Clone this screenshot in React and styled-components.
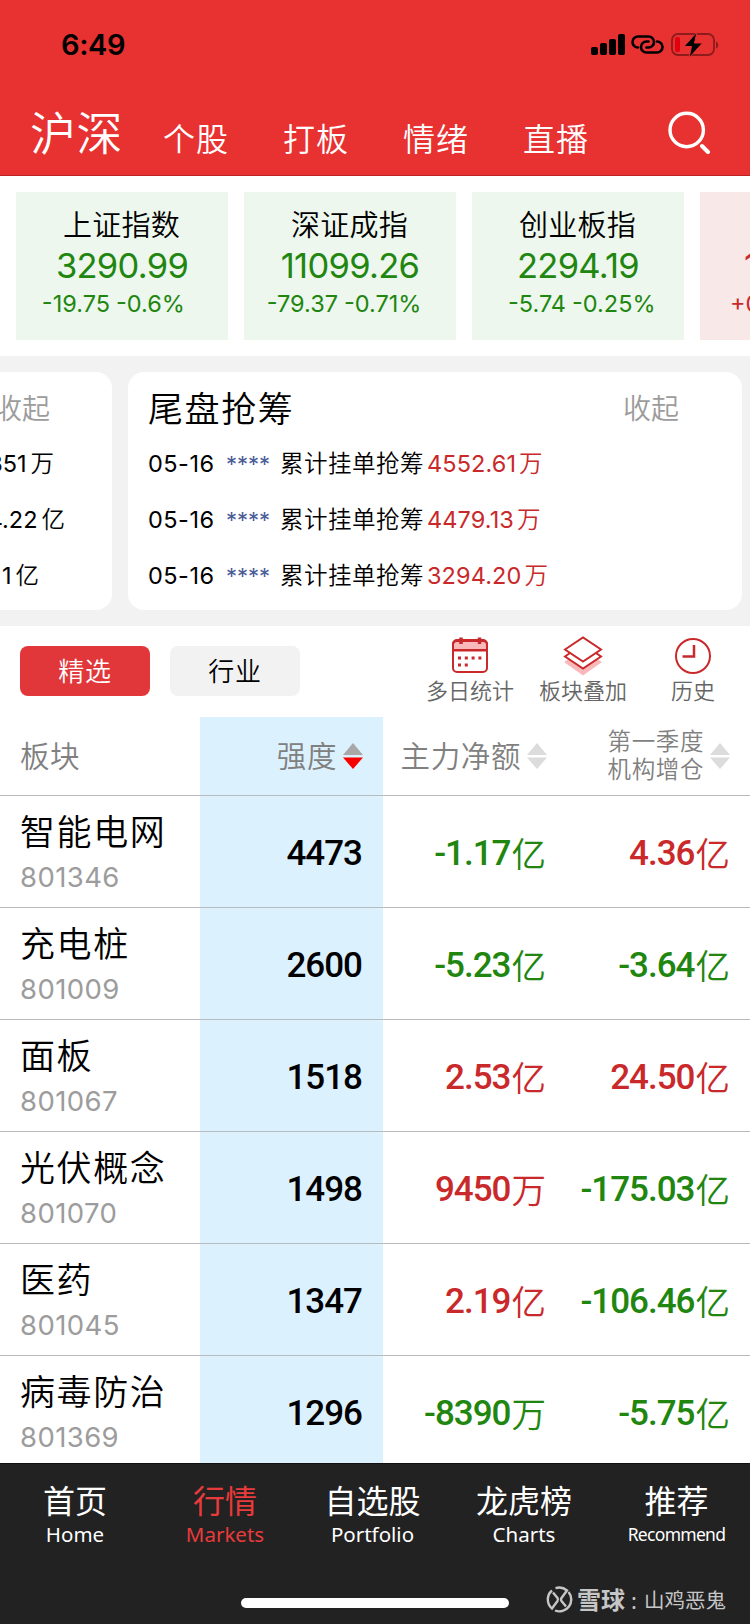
import React from "react";
import styled, { createGlobalStyle } from "styled-components";

/* COLORS */
const colorRed = "#e83131";
const colorButtonRed = "#e1373b";
const colorUp = "#c9292b";
const colorDown = "#21860f";
const colorGray = "#808080";
const colorLightGray = "#9c9c9c";
const colorPage = "#f2f2f2";
const colorHighlight = "#dcf1fe";
const colorDark = "#222222";

/* FONT */
const fontFamily = "Inter, 'Noto Sans CJK SC', sans-serif";
const fontNumber = "Roboto, 'Noto Sans CJK SC', sans-serif";
const fontFooter = "'Noto Sans', 'Noto Sans CJK SC', sans-serif";

const GlobalStyle = createGlobalStyle`
    * {
        box-sizing: border-box;
    }

    body {
        margin: 0;
        background-color: #fff;
    }
`;

const Screen = styled.div`
    width: 750px;
    height: 1624px;
    overflow: hidden;
    display: flex;
    flex-direction: column;
    background-color: #fff;
    color: #000;
    font-family: ${fontFamily};
    font-weight: 400;
    white-space: nowrap;
`;

/* HEADER */
const Header = styled.header`
    flex: none;
    height: 176px;
    background-color: ${colorRed};
    border-bottom: 1px solid #bb2424;
`;

const StatusBar = styled.div`
    height: 90px;
    padding: 0 31px 0 61px;
    display: flex;
    align-items: center;
    justify-content: space-between;
`;

const Time = styled.span`
    font-size: 29px;
    font-weight: 600;
    line-height: 40px;
    letter-spacing: -0.4px;
`;

const Nav = styled.nav`
    height: 85px;
    padding: 0 38px 0 30px;
    display: flex;
    align-items: center;
    color: #fff;
`;

const NavTitle = styled.span`
    width: 133px;
    font-size: 46px;
    line-height: 60px;
    letter-spacing: 0.5px;
    font-weight: 350;
`;

const NavTab = styled.span`
    width: 120px;
    padding-top: 15px;
    font-size: 32px;
    line-height: 40px;
    letter-spacing: 1px;
    font-weight: 350;
`;

const SearchIcon = styled.svg`
    margin-left: auto;
    margin-bottom: 2px;
`;

/* INDEX CARDS */
const Cards = styled.div`
    flex: none;
    height: 180px;
    padding: 16px;
    display: flex;
    gap: 16px;
`;

const Card = styled.div`
    flex: none;
    width: 212px;
    height: 148px;
    padding-top: 16px;
    text-align: center;
    color: ${(props) => (props.$up ? colorUp : colorDown)};
    background-color: ${(props) => (props.$up ? "#f9e8e8" : "#edf7ed")};
`;

const CardName = styled.div`
    color: #000;
    height: 34px;
    padding-right: 1px;
    font-size: 29px;
    line-height: 36px;
    letter-spacing: 0.3px;
    font-weight: 350;
`;

const CardValue = styled.div`
    font-size: 34.5px;
    line-height: 47px;
    height: 48px;
    letter-spacing: -0.7px;
    padding-left: ${(props) => props.$left || 0}px;
    text-align: ${(props) => (props.$left ? "left" : "center")};
`;

const CardChange = styled.div`
    display: grid;
    grid-template-columns: 94px 1fr;
    column-gap: 6px;
    font-size: 23.5px;
    line-height: 28px;
    text-align: left;
    padding-left: ${(props) => props.$left || 0}px;

    span:first-child {
        text-align: ${(props) => (props.$left ? "left" : "right")};
    }
`;

/* PANELS */
const Panels = styled.div`
    flex: none;
    height: 270px;
    padding: 16px 8px 16px 0;
    display: flex;
    gap: 16px;
    background-color: ${colorPage};
`;

const PanelEnd = styled.section`
    width: 112px;
    padding-top: 16px;
    border-radius: 0 16px 16px 0;
    background-color: #fff;
    overflow: hidden;
`;

const ClippedLine = styled.div`
    display: flex;
    justify-content: flex-end;
    padding-right: ${(props) => props.$right}px;
    font-size: 23.5px;
    line-height: 56px;

    span {
        margin-left: ${(props) => props.$gap || 4}px;
        font-weight: 350;
    }
`;

const Panel = styled.section`
    flex: 1;
    padding: 16px 63px 0 20px;
    border-radius: 16px;
    background-color: #fff;
`;

const PanelHeader = styled.div`
    height: 48px;
    display: flex;
    justify-content: space-between;
    padding-right: ${(props) => props.$right || 0}px;
    line-height: 42px;
`;

const PanelTitle = styled.h2`
    margin: 0;
    font-size: 35px;
    font-weight: 350;
    letter-spacing: 1.6px;
`;

const Collapse = styled.span`
    color: ${colorLightGray};
    margin-left: auto;
    font-size: 28px;
    font-weight: 350;
`;

const OrderLine = styled.div`
    display: flex;
    font-size: 23.5px;
    line-height: 56px;
`;

const OrderDate = styled.span`
    width: 77px;
    letter-spacing: 0.5px;
`;

const OrderStock = styled.span`
    width: 55px;
    padding-left: 1px;
    color: #4a5b96;
    font-size: 22px;
`;

const OrderText = styled.span`
    width: 147px;
    letter-spacing: 0.5px;
    font-weight: 350;
`;

const OrderAmount = styled.span`
    color: ${colorUp};
    letter-spacing: 0.1px;

    span {
        margin-left: 3px;
        font-weight: 350;
    }
`;

/* TOOLBAR */
const Toolbar = styled.div`
    flex: none;
    height: 91px;
    padding: 10px 24px 0 20px;
    display: flex;
    align-items: flex-start;
`;

const FilterButton = styled.button`
    width: 130px;
    height: 50px;
    margin: 10px 20px 0 0;
    padding: 0;
    border: none;
    border-radius: 8px;
    font: 350 26px / 51px ${fontFamily};
    letter-spacing: 0.8px;
    color: ${(props) => (props.$active ? "#fff" : "#000")};
    background-color: ${(props) => (props.$active ? colorButtonRed : colorPage)};
`;

const Tools = styled.div`
    margin-left: auto;
    display: flex;
    gap: 25px;
`;

const Tool = styled.div`
    display: flex;
    flex-direction: column;
    align-items: center;
    min-width: ${(props) => props.$min || 0}px;
    color: #666;
    font-size: 22px;
    line-height: 30px;
    font-weight: 350;

    &:last-child {
        margin-left: 8px;
    }

    svg {
        display: block;
        width: 40px;
        height: 40px;
    }
`;

/* TABLE */
const Table = styled.div`
    flex: none;
    height: 746px;
    overflow: hidden;
`;

const Row = styled.div`
    display: grid;
    grid-template-columns: 200px 183px 183px 184px;
    height: ${(props) => (props.$head ? 79 : 112)}px;
    border-bottom: 1px solid #b9bcbf;
    background: linear-gradient(
        to right,
        transparent 200px,
        ${colorHighlight} 200px,
        ${colorHighlight} 383px,
        transparent 383px
    );
`;

const HeadCell = styled.div`
    display: flex;
    align-items: center;
    justify-content: ${(props) => (props.$left ? "flex-start" : "flex-end")};
    gap: 6px;
    padding: 0 ${(props) => props.$right || 20}px 0 ${(props) => (props.$left ? 20 : 0)}px;
    color: ${colorGray};
    font-size: 29.5px;
    line-height: 40px;
    letter-spacing: 0.6px;
    font-weight: 350;

    svg {
        flex: none;
    }
`;

const SmallHead = styled.span`
    font-size: 23.5px;
    line-height: 28px;
    letter-spacing: 0.6px;
`;

const NameCell = styled.div`
    padding: 14px 0 0 20px;
`;

const Name = styled.div`
    font-size: 35px;
    line-height: 45px;
    height: 44px;
    letter-spacing: 1.6px;
    font-weight: 350;
`;

const Code = styled.div`
    color: ${colorLightGray};
    font-size: 27.5px;
    line-height: 46px;
    letter-spacing: 0.4px;
`;

const NumberCell = styled.div`
    display: flex;
    align-items: center;
    justify-content: flex-end;
    padding: 4px 21px 0 0;
    font-family: ${fontNumber};
    font-size: 35px;
    font-weight: 500;
    letter-spacing: -1px;
    color: ${(props) => props.$color || "#000"};

    span {
        margin: -4px -1px 0 1px;
        font-size: 34.5px;
        letter-spacing: 0;
        font-weight: 350;
    }
`;

/* FOOTER */
const Footer = styled.footer`
    flex: 1;
    border-top: 1px solid #111;
    background-color: ${colorDark};
    font-family: ${fontFooter};
`;

const TabBar = styled.div`
    height: 92px;
    padding-top: 15px;
    display: grid;
    grid-template-columns: 150px 150px 145px 158px 147px;
`;

const FooterTab = styled.div`
    text-align: center;
    color: ${(props) => (props.$active ? "#e83b3b" : "#fff")};
    font-size: 32px;
    line-height: 44px;

    small {
        display: block;
        font-size: ${(props) => (props.$small ? 17.5 : 20.5)}px;
        letter-spacing: ${(props) => (props.$small ? "-0.7px" : 0)};
        line-height: 22px;
    }
`;

const BottomBar = styled.div`
    height: 66px;
    display: grid;
    grid-template-columns: 241px 268px 1fr;
    align-items: center;
`;

const HomeIndicator = styled.div`
    grid-column: 2;
    height: 10px;
    margin-top: 28px;
    border-radius: 5px;
    background-color: #fff;
`;

const Watermark = styled.div`
    margin-top: 21px;
    padding-left: 37px;
    display: flex;
    align-items: center;
    color: #c6c6c6;
    font-size: 20.5px;
    line-height: 28px;

    b {
        margin-left: 4px;
        font-size: 24px;
        font-weight: 600;
    }
`;

const Colon = styled.span`
    width: 19px;
    padding-left: 6px;
    font-size: 22px;
`;

const indices = [
    { name: "上证指数", value: "3290.99", change: "-19.75", percent: "-0.6%" },
    { name: "深证成指", value: "11099.26", change: "-79.37", percent: "-0.71%" },
    { name: "创业板指", value: "2294.19", change: "-5.74", percent: "-0.25%" },
];

const orders = ["4552.61", "4479.13", "3294.20"];

const sectors = [
    { name: "智能电网", code: "801346", strength: 4473, net: ["-1.17", "亿"], fund: ["4.36", "亿"] },
    { name: "充电桩", code: "801009", strength: 2600, net: ["-5.23", "亿"], fund: ["-3.64", "亿"] },
    { name: "面板", code: "801067", strength: 1518, net: ["2.53", "亿"], fund: ["24.50", "亿"] },
    { name: "光伏概念", code: "801070", strength: 1498, net: ["9450", "万"], fund: ["-175.03", "亿"] },
    { name: "医药", code: "801045", strength: 1347, net: ["2.19", "亿"], fund: ["-106.46", "亿"] },
    { name: "病毒防治", code: "801369", strength: 1296, net: ["-8390", "万"], fund: ["-5.75", "亿"] },
];

const footerTabs = [
    { label: "首页", en: "Home" },
    { label: "行情", en: "Markets", active: true },
    { label: "自选股", en: "Portfolio" },
    { label: "龙虎榜", en: "Charts" },
    { label: "推荐", en: "Recommend", small: true },
];

function StatusIcons() {
    return (
        <svg width="128" height="26" viewBox="0 0 128 26" fill="none">
            <g fill="#000">
                <rect x="0" y="15" width="7" height="8" rx="2" />
                <rect x="9" y="11" width="7" height="12" rx="2" />
                <rect x="18" y="7" width="7" height="16" rx="2" />
                <rect x="27" y="2" width="7" height="21" rx="2" />
            </g>
            <g stroke="#000" strokeWidth="2.6" strokeLinecap="round">
                <path d="M47 15.500a5.500 5.500 0 0 1 0-11h10.500a5.500 5.500 0 0 1 0 11h-2" />
                <path d="M66 9.500a5.500 5.500 0 0 1 0 11h-10.500a5.500 5.500 0 0 1 0-11h2" />
            </g>
            <rect x="81" y="2" width="42" height="21" rx="6" stroke="#8f1c1c" strokeWidth="1.800" />
            <path d="M125 9.500c3 1 3 6 0 7z" fill="#8f1c1c" />
            <rect x="84" y="5" width="5" height="15" rx="2" fill="#e0000f" />
            <path
                d="M106 0L93 14.500h7.500l-2.500 11.500 13.500-15h-8z"
                fill="#000"
                stroke={colorRed}
                strokeWidth="1"
            />
        </svg>
    );
}

function SortArrows({ up = "#dcdcdc", down = "#dcdcdc" }) {
    return (
        <svg width="20" height="26" viewBox="0 0 20 26">
            <path d="M10 0L20 12H0z" fill={up} />
            <path d="M10 26L0 14.500H20z" fill={down} />
        </svg>
    );
}

function CalendarIcon() {
    return (
        <svg viewBox="0 0 40 40" fill="none" stroke={colorUp} strokeWidth="2">
            <path d="M3 14V9q0-4 4-4h26q4 0 4 4v5z" fill="#f9b9bb" />
            <rect x="3" y="4" width="34" height="32" rx="4" />
            <path d="M3 14.500h34" />
            <path d="M11 1.500v6.500M29.500 1.500v6.500" strokeWidth="3.500" />
            <path d="M8 22h26M8 29h12" strokeWidth="3" strokeDasharray="3 3.800" />
        </svg>
    );
}

function LayersIcon() {
    return (
        <svg viewBox="0 0 40 40" fill="none" stroke={colorUp} strokeWidth="2">
            <path d="M1 26L20 14L39 26L20 39.500z" fill="#f9b9bb" stroke="none" />
            <path d="M2 20.500L20 8L38 20.500L20 32.500z" fill="#fff" />
            <path d="M2 13.500L20 1.500L38 13.500L20 25.500z" fill="#fff" />
        </svg>
    );
}

function ClockIcon() {
    return (
        <svg viewBox="0 0 40 40" fill="none" stroke={colorUp} strokeWidth="2">
            <circle cx="20" cy="20" r="17" />
            <path d="M21 9v11.500H9.500" strokeWidth="2.500" />
        </svg>
    );
}

function XueqiuIcon() {
    return (
        <svg width="27" height="27" viewBox="0 0 27 27" fill="none" stroke="#c6c6c6" strokeWidth="2.400">
            <path d="M6 4.500A11.800 11.800 0 0 0 6 22.500L11.500 15q1-1.500 0-3L7 6.500" />
            <path d="M9.500 2.200A12 12 0 0 1 21 4.500L15.500 12q-1 1.500 0 3l4.500 5.500" />
            <path d="M22.500 6A11.800 11.800 0 0 1 9 24.500" />
        </svg>
    );
}

const amountColor = (value) => (value.startsWith("-") ? colorDown : colorUp);

function App() {
    return (
        <Screen>
            <GlobalStyle />
            <Header>
                <StatusBar>
                    <Time>6:49</Time>
                    <StatusIcons />
                </StatusBar>
                <Nav>
                    <NavTitle>沪深</NavTitle>
                    <NavTab>个股</NavTab>
                    <NavTab>打板</NavTab>
                    <NavTab>情绪</NavTab>
                    <NavTab>直播</NavTab>
                    <SearchIcon width="44" height="44" viewBox="0 0 44 44" fill="none" stroke="#fff">
                        <circle cx="18.700" cy="20" r="16.700" strokeWidth="3.400" />
                        <path d="M34 36l6 6" strokeWidth="4" strokeLinecap="round" />
                    </SearchIcon>
                </Nav>
            </Header>

            <Cards>
                {indices.map((index) => (
                    <Card key={index.name}>
                        <CardName>{index.name}</CardName>
                        <CardValue>{index.value}</CardValue>
                        <CardChange>
                            <span>{index.change}</span>
                            <span>{index.percent}</span>
                        </CardChange>
                    </Card>
                ))}
                <Card $up>
                    <CardName />
                    <CardValue $left={44}>1</CardValue>
                    <CardChange $left={30}>
                        <span>+0</span>
                    </CardChange>
                </Card>
            </Cards>

            <Panels>
                <PanelEnd>
                    <PanelHeader $right={62}>
                        <Collapse as={CollapseEnd}>收起</Collapse>
                    </PanelHeader>
                    <ClippedLine $right={58}>
                        351<span>万</span>
                    </ClippedLine>
                    <ClippedLine $right={47}>
                        4.22<span>亿</span>
                    </ClippedLine>
                    <ClippedLine $right={73}>
                        1<span>亿</span>
                    </ClippedLine>
                </PanelEnd>
                <Panel>
                    <PanelHeader>
                        <PanelTitle>尾盘抢筹</PanelTitle>
                        <Collapse>收起</Collapse>
                    </PanelHeader>
                    {orders.map((amount) => (
                        <OrderLine key={amount}>
                            <OrderDate>05-16</OrderDate>
                            <OrderStock>****</OrderStock>
                            <OrderText>累计挂单抢筹</OrderText>
                            <OrderAmount>
                                {amount}
                                <span>万</span>
                            </OrderAmount>
                        </OrderLine>
                    ))}
                </Panel>
            </Panels>

            <Toolbar>
                <FilterButton $active>精选</FilterButton>
                <FilterButton>行业</FilterButton>
                <Tools>
                    <Tool>
                        <CalendarIcon />
                        多日统计
                    </Tool>
                    <Tool>
                        <LayersIcon />
                        板块叠加
                    </Tool>
                    <Tool $min={66}>
                        <ClockIcon />
                        历史
                    </Tool>
                </Tools>
            </Toolbar>

            <Table>
                <Row $head>
                    <HeadCell $left>板块</HeadCell>
                    <HeadCell>
                        强度
                        <SortArrows up="#a8a8a8" down="#f90000" />
                    </HeadCell>
                    <HeadCell $right={19}>
                        主力净额
                        <SortArrows />
                    </HeadCell>
                    <HeadCell>
                        <SmallHead>
                            第一季度
                            <br />
                            机构增仓
                        </SmallHead>
                        <SortArrows />
                    </HeadCell>
                </Row>
                {sectors.map((sector) => (
                    <Row key={sector.code}>
                        <NameCell>
                            <Name>{sector.name}</Name>
                            <Code>{sector.code}</Code>
                        </NameCell>
                        <NumberCell>{sector.strength}</NumberCell>
                        <NumberCell $color={amountColor(sector.net[0])}>
                            {sector.net[0]}
                            <span>{sector.net[1]}</span>
                        </NumberCell>
                        <NumberCell $color={amountColor(sector.fund[0])}>
                            {sector.fund[0]}
                            <span>{sector.fund[1]}</span>
                        </NumberCell>
                    </Row>
                ))}
            </Table>

            <Footer>
                <TabBar>
                    {footerTabs.map((tab) => (
                        <FooterTab key={tab.en} $active={tab.active} $small={tab.small}>
                            {tab.label}
                            <small>{tab.en}</small>
                        </FooterTab>
                    ))}
                </TabBar>
                <BottomBar>
                    <HomeIndicator />
                    <Watermark>
                        <XueqiuIcon />
                        <b>雪球</b>
                        <Colon>:</Colon>
                        山鸡恶鬼
                    </Watermark>
                </BottomBar>
            </Footer>
        </Screen>
    );
}

/* the scrolled-out panel's link runs past the left edge of the screen */
const CollapseEnd = styled(Collapse)`
    flex: none;
    margin-left: -6px;
`;

export default App;
